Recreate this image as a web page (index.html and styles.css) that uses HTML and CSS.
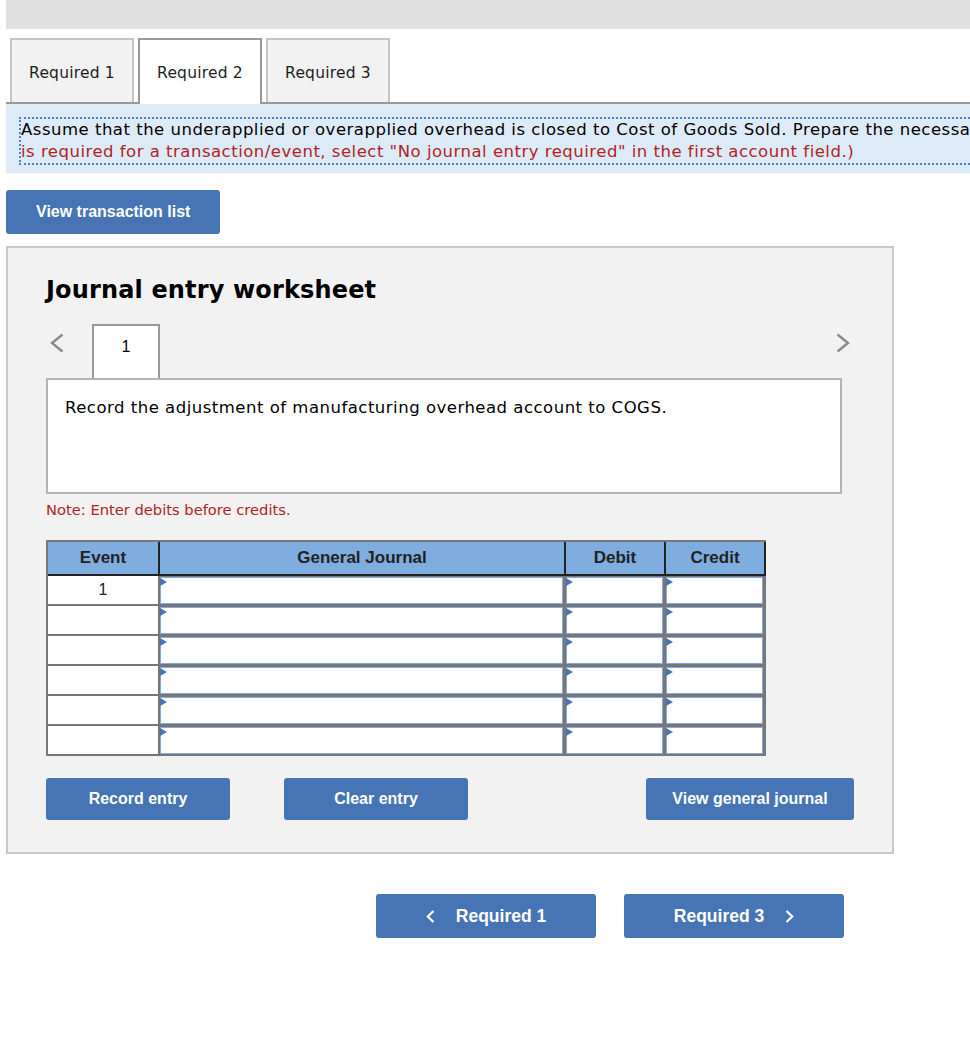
FILE: index.html
```html
<!DOCTYPE html>
<html lang="en">
<head>
<meta charset="utf-8">
<title>Journal entry worksheet</title>
<link rel="stylesheet" href="styles.css">
</head>
<body>
<div class="page">
  <div class="topbar"></div>

  <div class="tabs">
    <div class="tab">Required 1</div>
    <div class="tab active">Required 2</div>
    <div class="tab">Required 3</div>
  </div>

  <div class="banner">
    <div class="instr">Assume that the underapplied or overapplied overhead is closed to Cost of Goods Sold. Prepare the necessary journal entry. <span class="red">(If no entry</span><br><span class="red">is required for a transaction/event, select "No journal entry required" in the first account field.)</span></div>
  </div>

  <button class="btn btn-txlist">View transaction list</button>

  <div class="worksheet">
    <h2 class="ws-title">Journal entry worksheet</h2>

    <div class="nav">
      <svg class="chev chev-left" width="14" height="20" viewBox="0 0 14 20"><polyline points="12.5,1.5 2,10 12.5,18.5" fill="none" stroke="#8a8a8a" stroke-width="2.4"/></svg>
      <div class="pagetab">1</div>
      <svg class="chev chev-right" width="14" height="20" viewBox="0 0 14 20"><polyline points="1.5,1.5 12,10 1.5,18.5" fill="none" stroke="#8a8a8a" stroke-width="2.4"/></svg>
    </div>

    <div class="desc">Record the adjustment of manufacturing overhead account to COGS.</div>
    <p class="note">Note: Enter debits before credits.</p>

    <table class="jtable">
      <thead>
        <tr>
          <th class="c-ev">Event</th>
          <th class="c-gj">General Journal</th>
          <th class="c-amt">Debit</th>
          <th class="c-amt">Credit</th>
        </tr>
      </thead>
      <tbody>
        <tr><td class="ev">1</td><td class="in"><div class="field"></div></td><td class="in"><div class="field"></div></td><td class="in"><div class="field"></div></td></tr>
        <tr><td class="ev"></td><td class="in"><div class="field"></div></td><td class="in"><div class="field"></div></td><td class="in"><div class="field"></div></td></tr>
        <tr><td class="ev"></td><td class="in"><div class="field"></div></td><td class="in"><div class="field"></div></td><td class="in"><div class="field"></div></td></tr>
        <tr><td class="ev"></td><td class="in"><div class="field"></div></td><td class="in"><div class="field"></div></td><td class="in"><div class="field"></div></td></tr>
        <tr><td class="ev"></td><td class="in"><div class="field"></div></td><td class="in"><div class="field"></div></td><td class="in"><div class="field"></div></td></tr>
        <tr><td class="ev"></td><td class="in"><div class="field"></div></td><td class="in"><div class="field"></div></td><td class="in"><div class="field"></div></td></tr>
      </tbody>
    </table>

    <div class="actions">
      <button class="btn btn-act">Record entry</button>
      <button class="btn btn-act btn-clear">Clear entry</button>
      <button class="btn btn-act btn-gj">View general journal</button>
    </div>
  </div>

  <div class="footer-nav">
    <button class="btn btn-nav">
      <svg width="9" height="13" viewBox="0 0 9 13"><polyline points="7.5,1 1.8,6.5 7.5,12" fill="none" stroke="#fff" stroke-width="2.2"/></svg>
      <span>Required 1</span>
    </button>
    <button class="btn btn-nav">
      <span>Required 3</span>
      <svg width="9" height="13" viewBox="0 0 9 13"><polyline points="1.5,1 7.2,6.5 1.5,12" fill="none" stroke="#fff" stroke-width="2.2"/></svg>
    </button>
  </div>
</div>
</body>
</html>
```

FILE: styles.css
```css
html, body {
  margin: 0;
  padding: 0;
  background: #fff;
  overflow: hidden;
}

body {
  font-family: "DejaVu Sans", Verdana, sans-serif;
  color: #000;
}

.page {
  padding-left: 6px;
}

.topbar {
  height: 29px;
  background: #e0e0e0;
}

/* Tabs */
.tabs {
  display: flex;
  align-items: flex-end;
  gap: 4px;
  margin-top: 9px;
  padding-left: 4px;
  border-bottom: 2px solid #999;
}

.tab {
  width: 124px;
  height: 64px;
  box-sizing: border-box;
  border: 2px solid #c4c4c4;
  border-bottom: none;
  background: #f2f2f2;
  display: flex;
  align-items: center;
  justify-content: center;
  padding-top: 3px;
  font-size: 15.5px;
  letter-spacing: 0.2px;
  color: #1e1e1e;
}

.tab.active {
  background: #fff;
  border-color: #999;
  height: 66px;
  margin-bottom: -2px;
  padding-top: 1px;
}

/* Instruction banner */
.banner {
  background: #ddebf8;
  padding: 13px 0 8px 13px;
}

.instr {
  border: 2px dotted #4f7fc6;
  border-right: none;
  font-size: 16.5px;
  letter-spacing: 0.5px;
  line-height: 22px;
  white-space: nowrap;
  color: #000;
}

.red {
  color: #b22222;
}

/* Buttons */
.btn {
  background: #4674b4;
  color: #fff;
  border: none;
  border-radius: 3px;
  font-family: "Liberation Sans", Arial, sans-serif;
  font-weight: bold;
  font-size: 16px;
  padding: 0;
  box-sizing: border-box;
  cursor: pointer;
}

.btn-txlist {
  display: block;
  width: 214px;
  height: 44px;
  margin-top: 17px;
  padding-left: 30px;
  text-align: left;
}

/* Worksheet panel */
.worksheet {
  margin-top: 12px;
  width: 888px;
  box-sizing: border-box;
  border: 2px solid #c8c8c8;
  background: #f2f2f2;
  padding: 28px 38px 32px;
}

.ws-title {
  margin: 0;
  font-size: 24px;
  letter-spacing: 0.15px;
  line-height: 28px;
  font-weight: bold;
  color: #000;
}

.nav {
  display: flex;
  align-items: flex-start;
  height: 54px;
  margin-top: 20px;
}

.chev {
  display: block;
  margin-top: 9px;
}

.chev-left {
  margin-left: 4px;
}

.chev-right {
  margin-left: auto;
  margin-right: 4px;
}

.pagetab {
  width: 68px;
  height: 54px;
  box-sizing: border-box;
  margin-left: 28px;
  border: 2px solid #999;
  border-bottom: none;
  background: #fff;
  padding-top: 12px;
  text-align: center;
  font-family: "Liberation Sans", Arial, sans-serif;
  font-size: 16px;
  line-height: 18px;
  color: #000;
}

.desc {
  width: 796px;
  height: 116px;
  box-sizing: border-box;
  border: 2px solid #b4b4b4;
  background: #fff;
  padding: 17px;
  font-size: 16.5px;
  letter-spacing: 0.5px;
  line-height: 22px;
}

.note {
  margin: 7px 0 0;
  font-size: 14.7px;
  line-height: 18px;
  color: #b22222;
}

/* Journal table */
.jtable {
  margin-top: 21px;
  width: 720px;
  table-layout: fixed;
  border-collapse: separate;
  border-spacing: 0;
  border-top: 2px solid #777;
  border-left: 2px solid #777;
  font-family: "Liberation Sans", Arial, sans-serif;
}

.jtable th {
  box-sizing: border-box;
  height: 34px;
  padding: 0;
  background: #80addf;
  border-right: 2px solid #222;
  border-bottom: 2px solid #222;
  font-size: 17px;
  font-weight: bold;
  color: #222;
  text-align: center;
}

.c-ev { width: 112px; }
.c-gj { width: 406px; }
.c-amt { width: 100px; }

.jtable td {
  box-sizing: border-box;
  height: 30px;
  padding: 0;
  background: #fff;
  border-right: 2px solid #777;
  border-bottom: 2px solid #777;
}

.jtable td.ev {
  text-align: center;
  vertical-align: middle;
  font-size: 16px;
  color: #222;
}

.jtable td.in {
  background: #777;
  padding: 1px 1px 0 0;
  vertical-align: top;
}

.field {
  position: relative;
  height: 27px;
  box-sizing: border-box;
  border: 1px solid #86a8db;
  background: #fff;
}

.field::before {
  content: "";
  position: absolute;
  left: -1px;
  top: 0;
  border-left: 7px solid #4674b4;
  border-top: 4px solid transparent;
  border-bottom: 4px solid transparent;
}

/* Actions */
.actions {
  display: flex;
  margin-top: 22px;
}

.btn-act {
  width: 184px;
  height: 42px;
}

.btn-clear {
  margin-left: 54px;
}

.btn-gj {
  width: 208px;
  margin-left: auto;
}

/* Footer navigation */
.footer-nav {
  display: flex;
  justify-content: flex-end;
  gap: 28px;
  width: 888px;
  box-sizing: border-box;
  padding-right: 50px;
  margin-top: 40px;
}

.btn-nav {
  width: 220px;
  height: 44px;
  display: flex;
  align-items: center;
  justify-content: center;
  gap: 21px;
  font-size: 17.5px;
}

.btn-nav svg {
  display: block;
}
```
